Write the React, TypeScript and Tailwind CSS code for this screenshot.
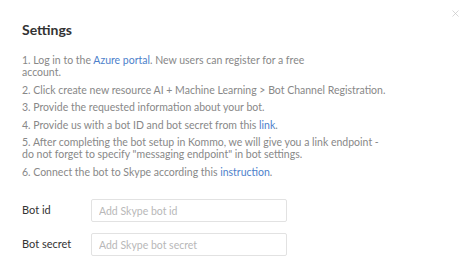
import { X } from 'lucide-react'

const font = { fontFamily: 'Lato, "Noto Sans", sans-serif' }

function Field({ label, placeholder }: { label: string; placeholder: string }) {
  return (
    <div className="flex items-center">
      <label className="w-[69px] text-[11px] text-[#333]">{label}</label>
      <input
        type="text"
        placeholder={placeholder}
        className="h-[23px] w-[196px] rounded-[2px] border border-[#e2e2e2] bg-white px-[7px] text-[10.5px] text-[#333] placeholder:text-[#b8b8b8] focus:outline-none"
      />
    </div>
  )
}

export default function App() {
  return (
    <div className="relative h-[270px] w-[474px] overflow-hidden bg-white" style={font}>
      <button className="absolute right-[13px] top-[8px] text-[#c4c4c4]">
        <X className="h-[11px] w-[11px]" strokeWidth={1.5} />
      </button>

      <div className="px-[22px] pt-[21px]">
        <h2 className="text-[14px] font-bold leading-[18px] text-[#333]">Settings</h2>

        <ol className="mt-[15px] space-y-[5.5px] text-[10.5px] leading-[12px] text-[#888]">
          <li>
            1. Log in to the <a className="text-[#4d7fcb]">Azure portal</a>. New users can register for a free
            <br />
            account.
          </li>
          <li>2. Click create new resource AI + Machine Learning &gt; Bot Channel Registration.</li>
          <li>3. Provide the requested information about your bot.</li>
          <li>
            4. Provide us with a bot ID and bot secret from this <a className="text-[#4d7fcb]">link</a>.
          </li>
          <li>
            5. After completing the bot setup in Kommo, we will give you a link endpoint -
            <br />
            do not forget to specify "messaging endpoint" in bot settings.
          </li>
          <li>
            6. Connect the bot to Skype according this <a className="text-[#4d7fcb]">instruction</a>.
          </li>
        </ol>

        <div className="mt-[21.5px] flex flex-col gap-[11px]">
          <Field label="Bot id" placeholder="Add Skype bot id" />
          <Field label="Bot secret" placeholder="Add Skype bot secret" />
        </div>
      </div>
    </div>
  )
}
